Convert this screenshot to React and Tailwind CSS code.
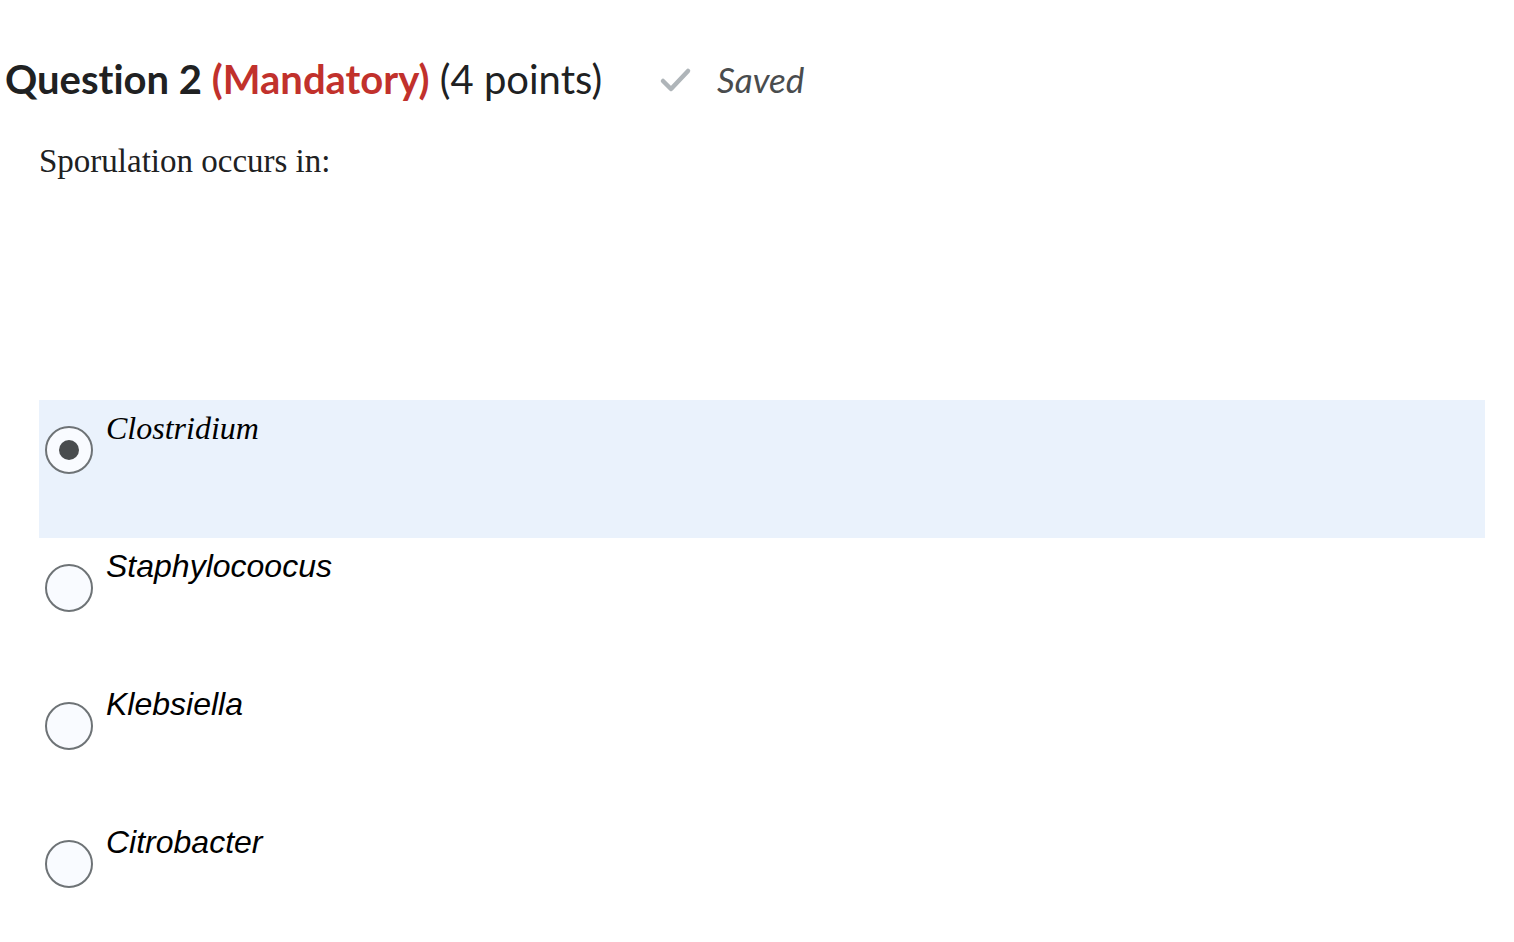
import { useState } from 'react'

const options = [
  { id: 'a', label: 'Clostridium', serif: true },
  { id: 'b', label: 'Staphylocoocus' },
  { id: 'c', label: 'Klebsiella' },
  { id: 'd', label: 'Citrobacter' },
]

function Radio({ checked }) {
  return (
    <span className="mt-[26px] ml-[6px] flex h-[48px] w-[48px] shrink-0 items-center justify-center rounded-full border-2 border-[#6e7376] bg-[#f9fbff]">
      {checked && <span className="h-[20px] w-[20px] rounded-full bg-[#494c4e]" />}
    </span>
  )
}

export default function App() {
  const [selected, setSelected] = useState('a')

  return (
    <div className="min-h-screen bg-white">
      {/* Header */}
      <div className="flex items-center pt-[53px] pl-[5px] font-['Lato',sans-serif] [font-variant-ligatures:none]">
        <h2 className="text-[40px] leading-[48px] text-[#202122]">
          <span className="font-bold">Question 2 </span>
          <span className="font-bold text-[#c1312c]">(Mandatory)</span>
          <span> (4 points)</span>
        </h2>
        <div className="ml-[57px] flex items-center gap-[24px]">
          <svg width="34" height="28" viewBox="0 0 34 28" className="mt-[2px]">
            <polyline points="4,15 12,23 29,5" fill="none" stroke="#afb5b9" strokeWidth="4.5" strokeLinecap="round" strokeLinejoin="round" />
          </svg>
          <span className="text-[35px] italic text-[#494c4e]">Saved</span>
        </div>
      </div>

      <div className="pl-[39px] pr-[29px]">
        <p className="mt-[35px] font-['Liberation_Serif',serif] text-[33px] leading-[40px] text-[#202122]">
          Sporulation occurs in:
        </p>

        <div className="mt-[219px]">
          {options.map((opt) => (
            <label
              key={opt.id}
              onClick={() => setSelected(opt.id)}
              className={`flex h-[138px] cursor-pointer items-start ${selected === opt.id ? 'bg-[#eaf2fc]' : ''}`}
            >
              <Radio checked={selected === opt.id} />
              <span
                className={`ml-[13px] pt-[9px] text-[32px] italic leading-[38px] text-black ${
                  opt.serif ? "font-['Liberation_Serif',serif]" : "font-['Liberation_Sans',sans-serif]"
                }`}
              >
                {opt.label}
              </span>
            </label>
          ))}
        </div>
      </div>
    </div>
  )
}
